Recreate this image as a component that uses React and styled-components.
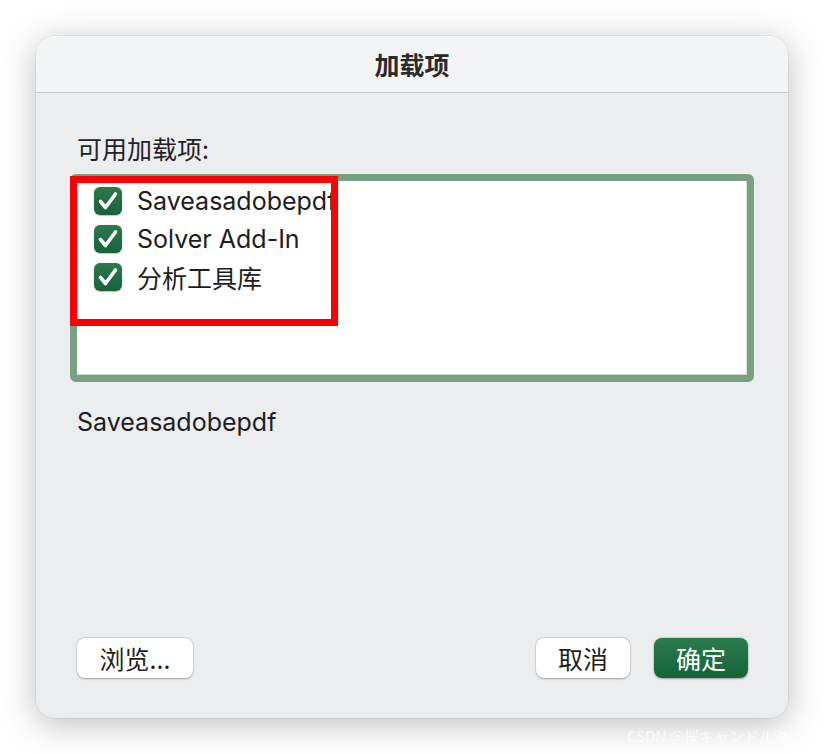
import React from "react";
import styled, { createGlobalStyle } from "styled-components";

const Global = createGlobalStyle`
  html, body { margin: 0; padding: 0; background: #ffffff; }
  body { width: 824px; height: 754px; overflow: hidden; position: relative;
    font-family: "Inter", "Noto Sans CJK SC", sans-serif; color: #1d1d1f; }
`;

const Page = styled.div`
  width: 824px;
  height: 754px;
  padding: 36px;
  box-sizing: border-box;
  position: relative;
`;

const Dialog = styled.div`
  width: 752px;
  height: 682px;
  border-radius: 18px;
  background: #ecedef;
  box-shadow: 0 6px 34px rgba(0, 0, 0, 0.26), 0 0 0 0.5px rgba(0, 0, 0, 0.12);
  display: flex;
  flex-direction: column;
  overflow: hidden;
`;

const TitleBar = styled.div`
  height: 56px;
  flex: none;
  display: flex;
  align-items: center;
  justify-content: center;
  background: #f3f4f6;
  border-bottom: 1px solid #c5c6c9;
  font-family: "Noto Sans CJK SC", sans-serif;
  font-weight: 700;
  font-size: 25px;
  color: #2a2a2c;
`;

const Body = styled.div`
  flex: 1;
  display: flex;
  flex-direction: column;
  padding: 40px 40px 40px 41px;
`;

const Label = styled.div`
  font-family: "Noto Sans CJK SC", sans-serif;
  font-size: 25px;
  line-height: 30px;
  height: 30px;
  color: #222224;
`;

const ListArea = styled.div`
  position: relative;
  margin: 11px -6px 0 -7px;
`;

const ListBox = styled.div`
  height: 208px;
  box-sizing: border-box;
  border: 7px solid #78a181;
  border-radius: 6px;
  background: #ffffff;
  box-shadow: inset 0 -1px 0 #d4d4d6, inset -1px 0 0 #e0e0e2;
  padding: 6px 0 0 17px;
  display: flex;
  flex-direction: column;
  gap: 10px;
  overflow: hidden;
`;

const Row = styled.div`
  display: flex;
  align-items: center;
  gap: 15px;
  height: 28px;
  font-size: 25px;
  color: #1d1d1f;
  white-space: nowrap;
`;

const Box = styled.span`
  width: 28px;
  height: 28px;
  flex: none;
  border-radius: 6px;
  background: linear-gradient(#2a7a4c, #17623a);
  display: flex;
  align-items: center;
  justify-content: center;
  box-shadow: 0 0.5px 1px rgba(0, 0, 0, 0.25);
`;

const Highlight = styled.div`
  position: absolute;
  left: 0;
  top: 2px;
  width: 268px;
  height: 150px;
  box-sizing: border-box;
  border: 7px solid #ff0000;
  pointer-events: none;
`;

const Selected = styled.div`
  margin-top: 25px;
  font-size: 25px;
  line-height: 30px;
  color: #1d1d1f;
`;

const Spacer = styled.div`
  flex: 1;
`;

const Footer = styled.div`
  display: flex;
  align-items: center;
  gap: 24px;
`;

const Button = styled.button`
  height: 40px;
  width: ${(p) => p.$w}px;
  border: none;
  border-radius: 8px;
  font-family: "Noto Sans CJK SC", sans-serif;
  font-size: 25px;
  line-height: 40px;
  padding: 0;
  background: ${(p) => (p.$primary ? "linear-gradient(#2a7b4d, #16643a)" : "#ffffff")};
  color: ${(p) => (p.$primary ? "#ffffff" : "#1f1f21")};
  box-shadow: 0 0.5px 2px rgba(0, 0, 0, 0.3), 0 0 0 0.5px rgba(0, 0, 0, 0.08);
  margin-left: ${(p) => (p.$push ? "auto" : "0")};
`;

const Watermark = styled.div`
  position: absolute;
  left: 627px;
  top: 725px;
  font-family: "Noto Sans CJK JP", sans-serif;
  font-size: 15px;
  color: rgba(255, 255, 255, 0.8);
  white-space: nowrap;
`;

const Check = () => (
  <svg width="24" height="24" viewBox="0 0 24 24">
    <path d="M4.5 12.5 L9.5 18.5 L19.5 5" fill="none" stroke="#ffffff" strokeWidth="3.6" strokeLinecap="round" strokeLinejoin="round" />
  </svg>
);

const items = ["Saveasadobepdf", "Solver Add-In", "分析工具库"];

export default function App() {
  return (
    <>
      <Global />
      <Page>
        <Dialog>
          <TitleBar>加载项</TitleBar>
          <Body>
            <Label>可用加载项:</Label>
            <ListArea>
              <ListBox>
                {items.map((t) => (
                  <Row key={t}>
                    <Box>
                      <Check />
                    </Box>
                    <span>{t}</span>
                  </Row>
                ))}
              </ListBox>
              <Highlight />
            </ListArea>
            <Selected>Saveasadobepdf</Selected>
            <Spacer />
            <Footer>
              <Button $w={116}>浏览...</Button>
              <Button $w={94} $push>取消</Button>
              <Button $w={94} $primary>确定</Button>
            </Footer>
          </Body>
        </Dialog>
        <Watermark>CSDN @桜キャンドル淋</Watermark>
      </Page>
    </>
  );
}
